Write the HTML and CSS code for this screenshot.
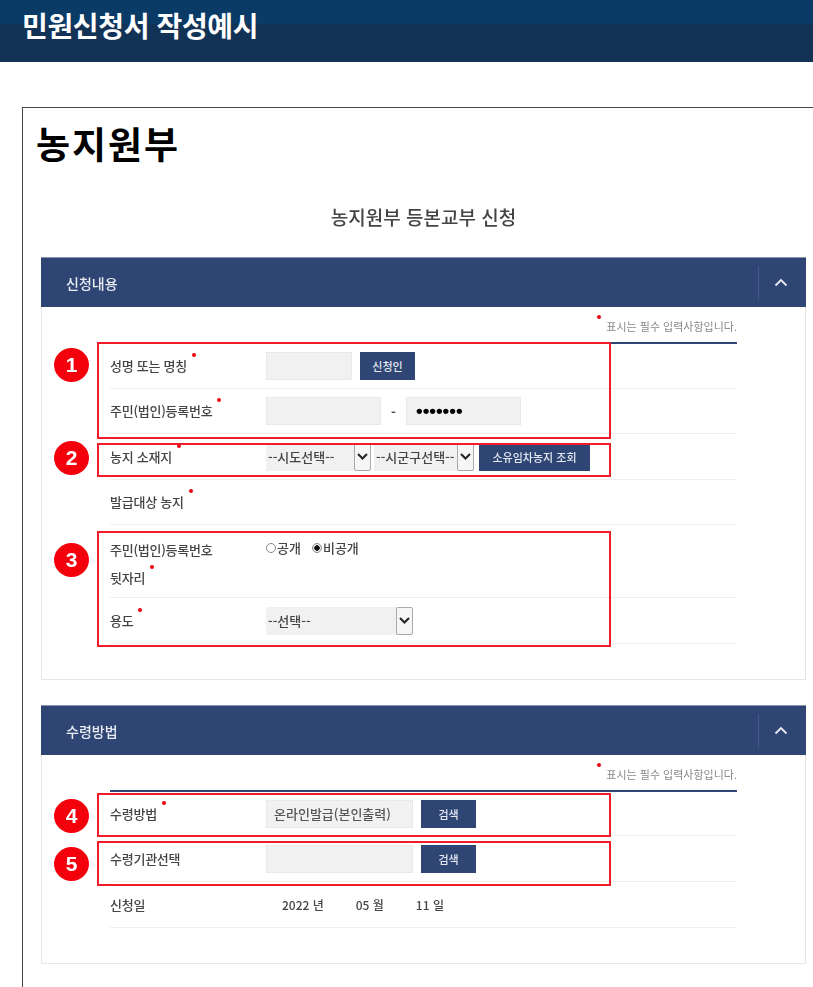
FILE: index.html
```html
<!DOCTYPE html>
<html lang="ko">
<head>
<meta charset="utf-8">
<title>민원신청서 작성예시</title>
<link rel="stylesheet" href="styles.css">
</head>
<body>
<header class="topbar"><h1 class="topbar-title">민원신청서 작성예시</h1></header>
<main class="sheet">
  <h2 class="sheet-title">농지원부</h2>
  <div class="capture">
    <h3 class="form-title">농지원부 등본교부 신청</h3>
    <section class="panel">
      <div class="panel-head">
        <span class="panel-name">신청내용</span>
        <span class="panel-toggle"><svg width="14" height="9" viewBox="0 0 14 9"><polyline points="1.5,7.5 7,2 12.5,7.5" fill="none" stroke="#e8ecf2" stroke-width="1.8"/></svg></span>
      </div>
      <div class="panel-body">
        <p class="note"><span class="req req-note">표시는 필수 입력사항입니다.</span></p>
        <div class="rows">
          <div class="row h45"><span class="label"><span class="req">성명 또는 명칭</span></span><div class="field"><input class="input w86" type="text" readonly><button class="btn w55 ml8" type="button">신청인</button></div></div>
          <div class="row h45"><span class="label"><span class="req">주민(법인)등록번호</span></span><div class="field"><input class="input w115" type="text" readonly><span class="dash">-</span><input class="input w115" type="password" value="1234567" readonly></div></div>
          <div class="row h46"><span class="label"><span class="req">농지 소재지</span></span><div class="field">
            <span class="select w105"><select><option>--시도선택--</option></select><span class="arrow"><svg width="11" height="7" viewBox="0 0 11 7"><polyline points="1,1 5.5,5.5 10,1" fill="none" stroke="#222" stroke-width="2"/></svg></span></span>
            <span class="select w100 ml3"><select><option>--시군구선택--</option></select><span class="arrow"><svg width="11" height="7" viewBox="0 0 11 7"><polyline points="1,1 5.5,5.5 10,1" fill="none" stroke="#222" stroke-width="2"/></svg></span></span>
            <button class="btn w111 ml5" type="button">소유임차농지 조회</button></div></div>
          <div class="row h45"><span class="label"><span class="req">발급대상 농지</span></span></div>
          <div class="row h73 top"><span class="label">주민(법인)등록번호<br><span class="req">뒷자리</span></span><div class="field radios">
            <span class="radio"><i class="dot"></i>공개</span><span class="radio"><i class="dot on"></i>비공개</span></div></div>
          <div class="row h46"><span class="label"><span class="req">용도</span></span><div class="field">
            <span class="select w147"><select><option>--선택--</option></select><span class="arrow"><svg width="11" height="7" viewBox="0 0 11 7"><polyline points="1,1 5.5,5.5 10,1" fill="none" stroke="#222" stroke-width="2"/></svg></span></span></div></div>
        </div>
      </div>
    </section>
    <section class="panel second">
      <div class="panel-head">
        <span class="panel-name">수령방법</span>
        <span class="panel-toggle"><svg width="14" height="9" viewBox="0 0 14 9"><polyline points="1.5,7.5 7,2 12.5,7.5" fill="none" stroke="#e8ecf2" stroke-width="1.8"/></svg></span>
      </div>
      <div class="panel-body">
        <p class="note"><span class="req req-note">표시는 필수 입력사항입니다.</span></p>
        <div class="rows">
          <div class="row h44"><span class="label"><span class="req">수령방법</span></span><div class="field"><input class="input w147 pad" type="text" value="온라인발급(본인출력)" readonly><button class="btn w55 ml8" type="button">검색</button></div></div>
          <div class="row h46"><span class="label">수령기관선택</span><div class="field"><input class="input w147" type="text" readonly><button class="btn w55 ml8" type="button">검색</button></div></div>
          <div class="row h46"><span class="label">신청일</span><div class="field date"><span>2022 년</span><span>05 월</span><span>11 일</span></div></div>
        </div>
      </div>
    </section>
  </div>
  <div class="mark box-1"></div><div class="mark box-2"></div><div class="mark box-3"></div><div class="mark box-4"></div><div class="mark box-5"></div>
  <b class="num num-1">1</b><b class="num num-2">2</b><b class="num num-3">3</b><b class="num num-4">4</b><b class="num num-5">5</b>
</main>
</body>
</html>
```
FILE: styles.css
```css
* { box-sizing: border-box; }
html, body { height: 100%; overflow: hidden; }
body { margin: 0; background: #fff; color: #444; font-family: "Noto Sans CJK KR", "Noto Sans", sans-serif; }

.topbar { height: 62px; background: linear-gradient(#0a3a66 0, #0a3a66 24px, #123256 24px, #123256 100%); padding-left: 22px; }
.topbar-title { margin: 0; color: #fff; font-size: 28px; line-height: 50px; font-weight: 700; letter-spacing: -0.35px; }

.sheet { position: relative; margin: 45px 0 0 22px; height: 960px; border: solid #444; border-width: 1px 0 0 1px; }
.sheet-title { margin: 0; height: 74px; padding-left: 13px; color: #000; font-size: 37px; line-height: 70px; font-weight: 700; letter-spacing: 2px; }

.capture { margin: 0 7px 0 18px; filter: blur(0.55px); }
.form-title { margin: 15px 0 20px; text-align: center; font-size: 19px; line-height: 40px; font-weight: 500; color: #444; }

.panel-head { display: flex; align-items: center; justify-content: space-between; height: 50px; padding-left: 25px; background: #2f4675; border-top: 1px solid #8794ae; }
.panel-name { color: #e8ecf2; font-size: 14px; font-weight: 500; }
.panel-toggle { display: flex; align-items: center; justify-content: center; width: 48px; height: 34px; padding-right: 3px; border-left: 1px solid #46598a; }

.panel-body { padding: 0 68px 35px; border: 1px solid #e6e6e6; border-top: 0; }
.second { margin-top: 25px; }

.note { display: flex; justify-content: flex-end; align-items: flex-end; height: 35px; margin: 0; padding-bottom: 8px; font-size: 11px; line-height: 16px; color: #888; }
.rows { border-top: 2px solid #2f4675; }

.row { display: flex; align-items: center; border-bottom: 1px solid #efefef; }
.h44 { height: 44px; }
.h45 { height: 45px; }
.h46 { height: 46px; }
.h73 { height: 73px; }
.top { align-items: flex-start; padding-top: 11px; }

.label { flex: none; width: 156px; font-size: 13px; line-height: 28px; font-weight: 500; color: #444; letter-spacing: -0.25px; }
.req { position: relative; display: inline-block; }
.req::after { content: ""; position: absolute; top: 1px; right: -9px; width: 4px; height: 4px; border-radius: 50%; background: #f00010; }
.req-note::after { top: -3px; right: auto; left: -9px; }

.field { display: flex; align-items: center; }
.input { height: 28px; padding: 0; border: 1px dotted #e2e2e2; background: #f1f1f1; font: 500 13px "Noto Sans CJK KR", sans-serif; color: #555; outline: 0; }
.pad { padding-left: 7px; }
input[type="password"] { padding-left: 9px; color: #000; font: 700 19px "Liberation Sans", sans-serif; letter-spacing: 0; }
.dash { width: 25px; text-align: center; font-weight: 700; font-size: 13px; }

.w55 { flex: none; width: 55px; }
.w86 { flex: none; width: 86px; }
.w100 { flex: none; width: 100px; }
.w105 { flex: none; width: 105px; }
.w111 { flex: none; width: 111px; }
.w115 { flex: none; width: 115px; }
.w147 { flex: none; width: 147px; }
.ml3 { margin-left: 3px; }
.ml5 { margin-left: 5px; }
.ml8 { margin-left: 8px; }

.btn { height: 28px; padding: 0; border: 0; background: #2f4675; color: #e4e8f0; font: 500 11px "Noto Sans CJK KR", sans-serif; }

.select { display: flex; height: 28px; background: #f1f1f1; }
.select select { flex: 1; min-width: 0; height: 28px; padding: 0 0 0 2px; border: 0; background: transparent; appearance: none; font: 500 13px "Noto Sans CJK KR", sans-serif; color: #444; outline: 0; }
.arrow { display: flex; flex: none; align-items: center; justify-content: center; width: 17px; border: 1px solid #aaa; border-radius: 2px; background: #f6f6f6; }

.radios { gap: 11px; margin-top: -2px; }
.radio { display: flex; align-items: center; font-size: 13px; line-height: 28px; font-weight: 500; }
.dot { display: block; width: 10px; height: 10px; margin-right: 1px; border: 1px solid #888; border-radius: 50%; background: #fff; }
.dot.on { background: radial-gradient(circle, #111 0, #111 2.5px, #eee 3px); }

.date { gap: 32px; padding-left: 16px; font-size: 12px; font-weight: 500; }

.mark { position: absolute; left: 74px; width: 514px; border: 2px solid #f01c2c; }
.box-1 { top: 234px; height: 97px; }
.box-2 { top: 335px; height: 34px; }
.box-3 { top: 423px; height: 116px; }
.box-4 { top: 685px; height: 44px; }
.box-5 { top: 733px; height: 45px; }

.num { position: absolute; left: 31px; width: 35px; height: 34px; border-radius: 50%; background: #f4000c; color: #fff; font: 700 21px/34px "Liberation Sans", sans-serif; text-align: center; }
.num-1 { top: 240px; }
.num-2 { top: 333px; }
.num-3 { top: 435px; }
.num-4 { top: 691px; }
.num-5 { top: 739px; }
```
